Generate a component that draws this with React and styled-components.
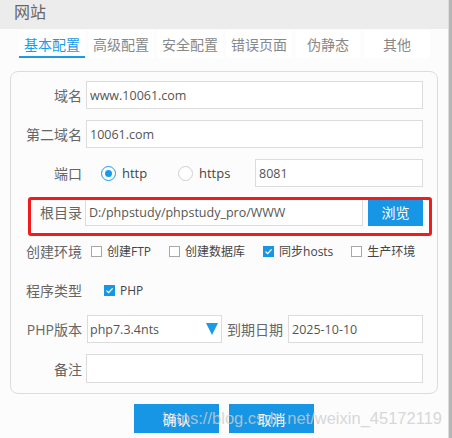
import React from "react";
import styled, { createGlobalStyle } from "styled-components";

const BLUE = "#1896e6";

const GlobalStyle = createGlobalStyle`
  html, body { margin: 0; padding: 0; }
  body {
    background: #fcfcfc;
    font-family: "Open Sans", "Noto Sans CJK SC", sans-serif;
    color: #666;
  }
  * { box-sizing: border-box; }
`;

const Window = styled.div`
  position: relative;
  display: flex;
  width: 452px;
  height: 438px;
  overflow: hidden;
`;

const Main = styled.div`
  width: 448px;
  display: flex;
  flex-direction: column;
`;

const Stripe = styled.div`
  width: 4px;
  background: #b6b6b6;
  border-left: 1px solid #dcdcdc;
`;

const Header = styled.div`
  height: 29px;
  background: #ececec;
  padding: 1px 0 0 14px;
  font-size: 16px;
  line-height: 22px;
  color: #666;
`;

const TabBar = styled.div`
  display: flex;
  gap: 3px;
  height: 28px;
  margin-top: 1px;
  padding-left: 19px;
`;

const Tab = styled.div`
  width: 66px;
  background: #fff;
  display: flex;
  align-items: center;
  justify-content: center;
  font-size: 14px;
  padding-top: 2px;
  color: ${(p) => (p.$active ? "#1a9be8" : "#888")};
  border-bottom: 2px solid ${(p) => (p.$active ? "#1a9be8" : "transparent")};
`;

const Panel = styled.div`
  margin: 13px 0 0 10px;
  width: 428px;
  border: 1px solid #dcdcdc;
  border-radius: 8px;
  padding: 9px 14px 10px 14px;
  display: flex;
  flex-direction: column;
  gap: 11px;
`;

const Row = styled.div`
  position: relative;
  display: flex;
  align-items: center;
  height: ${(p) => p.$h || 28}px;
`;

const Highlight = styled.div`
  position: absolute;
  left: 3px;
  top: -1px;
  right: -9px;
  bottom: -10px;
  border: 3px solid #f21b1b;
  border-radius: 3px;
  pointer-events: none;
`;

const Label = styled.div`
  width: 57px;
  flex-shrink: 0;
  text-align: right;
  font-size: 14px;
  color: #666;
  margin-right: 4px;
  white-space: nowrap;
`;

const Field = styled.input`
  flex: 1;
  min-width: 0;
  height: 100%;
  margin-left: ${(p) => p.$ml || 0}px;
  border: 1px solid #dcdcdc;
  background: #fff;
  padding: 0 3px;
  font-family: "Open Sans", "Noto Sans CJK SC", sans-serif;
  font-size: 12.5px;
  color: #555;
  outline: none;
`;

const RadioOption = styled.label`
  display: flex;
  align-items: center;
  gap: 6px;
  width: 77px;
  font-size: 13px;
  color: #444;
  margin-left: ${(p) => p.$ml || 0}px;
`;

const RadioCircle = styled.span`
  width: 15px;
  height: 15px;
  border-radius: 50%;
  border: 1.5px solid ${(p) => (p.$on ? "#1a9be8" : "#cfcfcf")};
  background: #fff;
  display: flex;
  align-items: center;
  justify-content: center;
  &::after {
    content: "";
    width: 7px;
    height: 7px;
    border-radius: 50%;
    background: ${(p) => (p.$on ? "#1a9be8" : "transparent")};
  }
`;

const Checks = styled.div`
  display: flex;
  align-items: center;
  gap: 18px;
  margin-left: ${(p) => p.$ml || 0}px;
`;

const CheckOption = styled.label`
  display: flex;
  align-items: center;
  gap: 5px;
  font-size: 12px;
  color: #444;
  white-space: nowrap;
`;

const Box = styled.span`
  width: 11px;
  height: 11px;
  border: 1px solid ${(p) => (p.$on ? BLUE : "#a8a8a8")};
  background: ${(p) => (p.$on ? BLUE : "#fff")};
  display: flex;
  align-items: center;
  justify-content: center;
`;

const BrowseButton = styled.div`
  width: 55px;
  height: 100%;
  margin-left: 5px;
  background: ${BLUE};
  color: #fff;
  font-size: 14px;
  display: flex;
  align-items: center;
  justify-content: center;
`;

const Select = styled.div`
  width: 135px;
  height: 100%;
  border: 1px solid #dcdcdc;
  background: #fff;
  display: flex;
  align-items: center;
  justify-content: space-between;
  padding: 0 3px 0 2px;
  font-size: 12.5px;
  color: #555;
  margin-left: 1px;
`;

const InlineLabel = styled.div`
  font-size: 14px;
  color: #666;
  margin: 0 5px;
  white-space: nowrap;
`;

const ButtonBar = styled.div`
  display: flex;
  justify-content: center;
  gap: 10px;
  margin-top: 10px;
  width: 448px;
`;

const Button = styled.div`
  width: 85px;
  height: 29px;
  background: ${BLUE};
  color: #fff;
  font-size: 14px;
  display: flex;
  align-items: center;
  justify-content: center;
`;

const Watermark = styled.div`
  position: absolute;
  right: 10px;
  top: 408px;
  font-family: "Liberation Sans", Arial, sans-serif;
  font-size: 16.5px;
  line-height: 20px;
  color: rgba(205, 205, 205, 0.8);
  pointer-events: none;
  white-space: nowrap;
`;

const Check = () => (
  <svg width="9" height="9" viewBox="0 0 9 9">
    <path d="M1.5 4.6 L3.6 6.6 L7.6 2.4" fill="none" stroke="#fff" strokeWidth="1.3" />
  </svg>
);

const Caret = () => (
  <svg width="12" height="12" viewBox="0 0 12 12">
    <polygon points="0,0 12,0 6,12" fill="#1a9be8" />
  </svg>
);

const tabs = ["基本配置", "高级配置", "安全配置", "错误页面", "伪静态", "其他"];

export default function App() {
  return (
    <Window>
      <GlobalStyle />
      <Main>
        <Header>网站</Header>
        <TabBar>
          {tabs.map((t, i) => (
            <Tab key={t} $active={i === 0}>{t}</Tab>
          ))}
        </TabBar>
        <Panel>
          <Row>
            <Label>域名</Label>
            <Field readOnly value="www.10061.com" />
          </Row>
          <Row>
            <Label>第二域名</Label>
            <Field readOnly value="10061.com" />
          </Row>
          <Row>
            <Label>端口</Label>
            <RadioOption $ml={15}>
              <RadioCircle $on />
              http
            </RadioOption>
            <RadioOption>
              <RadioCircle />
              https
            </RadioOption>
            <Field readOnly value="8081" />
          </Row>
          <Row>
            <Highlight />
            <Label>根目录</Label>
            <Field readOnly value="D:/phpstudy/phpstudy_pro/WWW" $ml={-1} />
            <BrowseButton>浏览</BrowseButton>
          </Row>
          <Row>
            <Label>创建环境</Label>
            <Checks $ml={5}>
              <CheckOption><Box />创建FTP</CheckOption>
              <CheckOption><Box />创建数据库</CheckOption>
              <CheckOption><Box $on><Check /></Box>同步hosts</CheckOption>
              <CheckOption><Box />生产环境</CheckOption>
            </Checks>
          </Row>
          <Row>
            <Label>程序类型</Label>
            <Checks $ml={18}>
              <CheckOption><Box $on><Check /></Box>PHP</CheckOption>
            </Checks>
          </Row>
          <Row>
            <Label>PHP版本</Label>
            <Select>
              <span>php7.3.4nts</span>
              <Caret />
            </Select>
            <InlineLabel>到期日期</InlineLabel>
            <Field readOnly value="2025-10-10" />
          </Row>
          <Row $h={29}>
            <Label>备注</Label>
            <Field readOnly value="" />
          </Row>
        </Panel>
        <ButtonBar>
          <Button>确认</Button>
          <Button>取消</Button>
        </ButtonBar>
      </Main>
      <Stripe />
      <Watermark>https://blog.csdn.net/weixin_45172119</Watermark>
    </Window>
  );
}
